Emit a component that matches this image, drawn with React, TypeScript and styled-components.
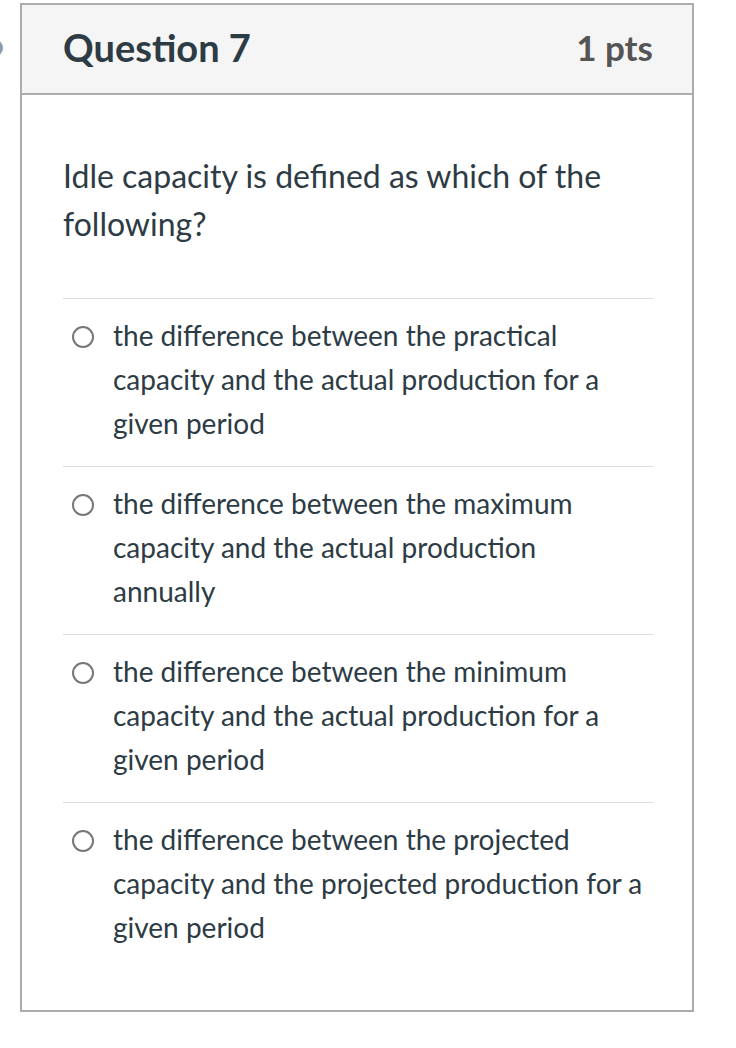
import styled, { createGlobalStyle } from "styled-components";

const GlobalStyle = createGlobalStyle`
  body {
    margin: 0;
    background: #ffffff;
    font-family: Lato, "Open Sans", sans-serif;
  }
`;

const Page = styled.div`
  display: flex;
  align-items: flex-start;
  padding-top: 3px;
  width: 736px;
  height: 1048px;
  box-sizing: border-box;
`;

const Flag = styled.div`
  width: 20px;
  padding-top: 35px;
  flex-shrink: 0;
`;

const Card = styled.div`
  width: 674px;
  border: 2px solid #acacac;
  box-sizing: border-box;
  background: #ffffff;
`;

const Header = styled.div`
  display: flex;
  justify-content: space-between;
  align-items: center;
  height: 90px;
  padding: 0 39px 4px 41px;
  box-sizing: border-box;
  background: #f5f5f5;
  border-bottom: 2px solid #acacac;
`;

const Title = styled.h2`
  margin: 0;
  font-size: 38px;
  font-weight: 700;
  color: #2d3b45;
`;

const Points = styled.div`
  font-size: 35px;
  font-weight: 700;
  color: #555555;
`;

const Body = styled.div`
  padding: 57px 39px 40px 41px;
`;

const QuestionText = styled.p`
  margin: 0 0 50px;
  font-size: 32px;
  line-height: 48px;
  color: #2d3b45;
`;

const Answer = styled.label`
  display: flex;
  align-items: flex-start;
  gap: 19px;
  padding: 14px 0 21px;
  border-top: 1px solid #dddddd;
`;

const Radio = styled.span`
  flex-shrink: 0;
  width: 22px;
  height: 22px;
  margin: 13px 0 0 9px;
  border: 2px solid #777777;
  border-radius: 50%;
  box-sizing: border-box;
`;

const AnswerText = styled.span`
  max-width: 531px;
  font-size: 28px;
  line-height: 44px;
  color: #2d3b45;
`;

const answers = [
  "the difference between the practical capacity and the actual production for a given period",
  "the difference between the maximum capacity and the actual production annually",
  "the difference between the minimum capacity and the actual production for a given period",
  "the difference between the projected capacity and the projected production for a given period",
];

const App = () => {
  return (
    <>
      <GlobalStyle />
      <Page>
        <Flag>
          <svg width="4" height="20" viewBox="0 0 4 20">
            <circle cx="-6" cy="10" r="9" fill="#8a9bb0" />
          </svg>
        </Flag>
        <Card>
          <Header>
            <Title>Question 7</Title>
            <Points>1 pts</Points>
          </Header>
          <Body>
            <QuestionText>
              Idle capacity is defined as which of the following?
            </QuestionText>
            {answers.map((a) => (
              <Answer key={a}>
                <Radio />
                <AnswerText>{a}</AnswerText>
              </Answer>
            ))}
          </Body>
        </Card>
      </Page>
    </>
  );
};

export default App;
